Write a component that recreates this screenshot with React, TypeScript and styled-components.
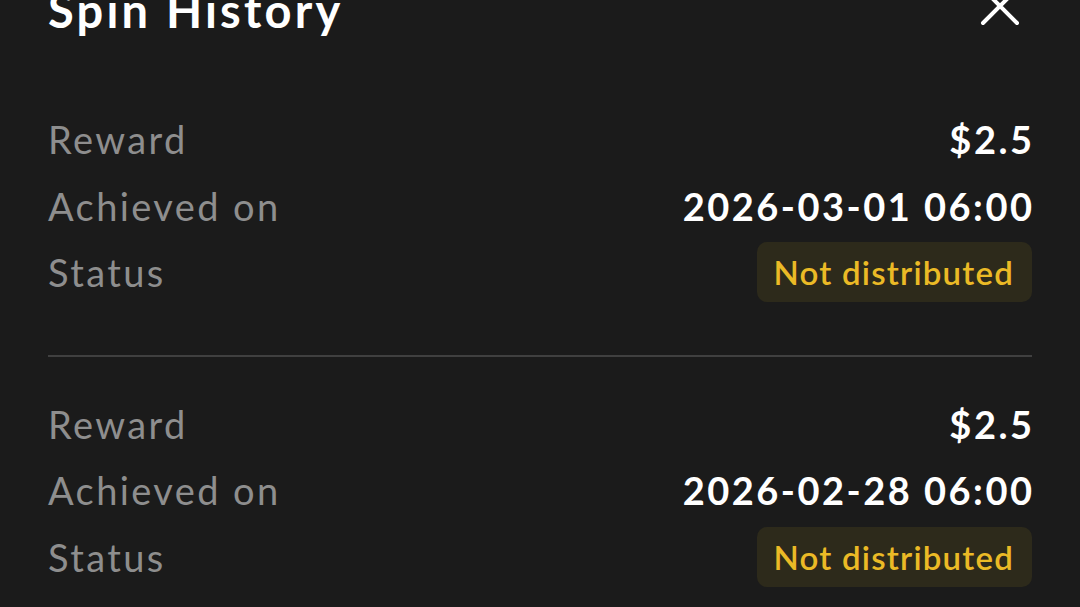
import React from 'react';
import styled, { createGlobalStyle } from 'styled-components';

const GlobalStyle = createGlobalStyle`
  html, body {
    margin: 0;
    padding: 0;
    background: #1b1b1b;
    overflow: hidden;
  }
  body {
    font-family: Lato, "Liberation Sans", sans-serif;
    -webkit-font-smoothing: antialiased;
  }
`;

type Entry = {
  reward: string;
  achievedOn: string;
  status: string;
};

const entries: Entry[] = [
  { reward: '$2.5', achievedOn: '2026-03-01 06:00', status: 'Not distributed' },
  { reward: '$2.5', achievedOn: '2026-02-28 06:00', status: 'Not distributed' },
];

function CloseIcon() {
  return (
    <svg width="44" height="44" viewBox="0 0 44 44" fill="none">
      <path d="M5 5 L39 39 M39 5 L5 39" stroke="#ffffff" strokeWidth="4" strokeLinecap="round" />
    </svg>
  );
}

export default function App() {
  return (
    <>
      <GlobalStyle />
      <Sheet>
        <Header>
          <Title>Spin History</Title>
          <CloseButton aria-label="close">
            <CloseIcon />
          </CloseButton>
        </Header>
        <List>
          {entries.map((entry, i) => (
            <Group key={i} $first={i === 0}>
              <Row>
                <Label>Reward</Label>
                <Value>{entry.reward}</Value>
              </Row>
              <Row>
                <Label>Achieved on</Label>
                <Value>{entry.achievedOn}</Value>
              </Row>
              <Row>
                <Label>Status</Label>
                <Badge>{entry.status}</Badge>
              </Row>
            </Group>
          ))}
        </List>
      </Sheet>
    </>
  );
}

const Sheet = styled.div`
  width: 1080px;
  height: 607px;
  padding: 0 48px;
  box-sizing: border-box;
  background: #1b1b1b;
  overflow: hidden;
`;

const Header = styled.div`
  display: flex;
  align-items: center;
  justify-content: space-between;
  height: 80px;
  margin-top: -30px;
`;

const Title = styled.h1`
  margin: 0;
  font-size: 47px;
  font-weight: 700;
  letter-spacing: 3.2px;
  color: #ffffff;
`;

const CloseButton = styled.button`
  display: flex;
  align-items: center;
  justify-content: center;
  padding: 0;
  margin: -8px 10px 0 0;
  background: none;
  border: none;
`;

const List = styled.div`
  display: flex;
  flex-direction: column;
  margin-top: 56px;
`;

const Group = styled.div<{ $first: boolean }>`
  display: flex;
  flex-direction: column;
  padding: ${(p) => (p.$first ? '0 0 49px' : '34px 0 48px')};
  border-top: ${(p) => (p.$first ? 'none' : '2px solid #404040')};
`;

const Row = styled.div`
  display: flex;
  align-items: center;
  justify-content: space-between;
  height: 66.5px;
`;

const Label = styled.span`
  font-size: 38px;
  letter-spacing: 2.4px;
  color: #8e8e8e;
`;

const Value = styled.span`
  font-size: 38px;
  font-weight: 700;
  letter-spacing: 2.5px;
  margin-right: -2.5px;
  color: #ffffff;
`;

const Badge = styled.span`
  display: inline-flex;
  align-items: center;
  height: 60px;
  padding: 0 18px 0 17px;
  border-radius: 10px;
  background: #2d2a1b;
  color: #ebba26;
  font-size: 33px;
  font-weight: 600;
  letter-spacing: 1.2px;
  box-sizing: border-box;
`;
